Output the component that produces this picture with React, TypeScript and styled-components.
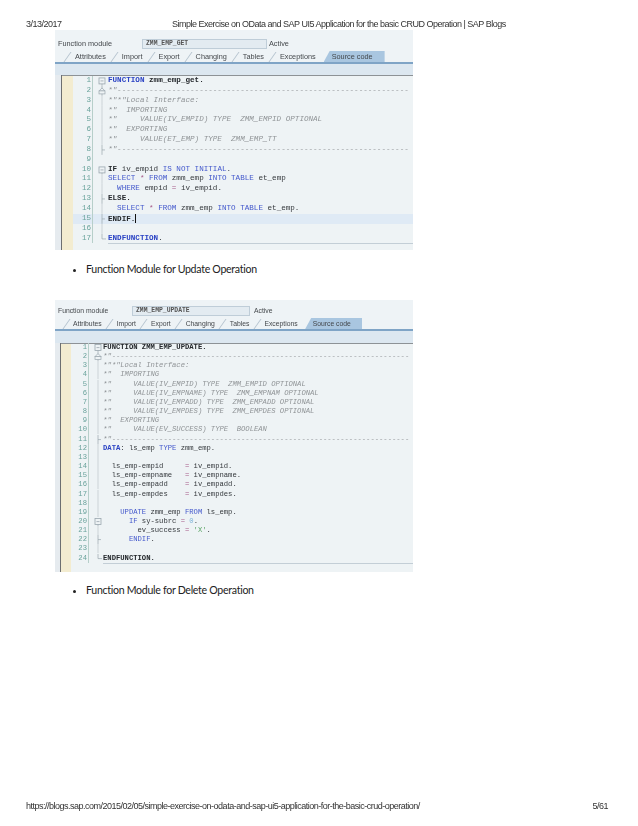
import React, { FC } from 'react'
import styled, { createGlobalStyle } from 'styled-components'

type Kind = 'plain' | 'key' | 'keyBold' | 'bold' | 'note' | 'op' | 'num' | 'str'
type Seg = [Kind, string]
type Fold = 'box' | 'open' | 'tick' | 'end' | 'line' | 'none'
type CodeLine = { segs: Seg[]; fold?: Fold; active?: boolean; caret?: boolean }

type Metrics = {
  height: number
  labelWidth: number
  fieldWidth: number
  fieldGap: number
  topPad: number
  stripLeft: number
  tabPad: number
  barBand: number
  yellowLeft: number
  yellowWidth: number
  numWidth: number
  foldWidth: number
  codeTop: number
  lineHeight: number
  fontSize: number
  uiSize: number
}

const GET_CODE: CodeLine[] = [
  { fold: 'box', segs: [['keyBold', 'FUNCTION'], ['bold', ' zmm_emp_get.']] },
  { fold: 'open', segs: [['note', '*"' + '-'.repeat(64)]] },
  { segs: [['note', '*"*"Local Interface:']] },
  { segs: [['note', '*"  IMPORTING']] },
  { segs: [['note', '*"     VALUE(IV_EMPID) TYPE  ZMM_EMPID OPTIONAL']] },
  { segs: [['note', '*"  EXPORTING']] },
  { segs: [['note', '*"     VALUE(ET_EMP) TYPE  ZMM_EMP_TT']] },
  { fold: 'tick', segs: [['note', '*"' + '-'.repeat(64)]] },
  { fold: 'none', segs: [] },
  { fold: 'box', segs: [['bold', 'IF'], ['plain', ' iv_empid '], ['key', 'IS NOT INITIAL'], ['plain', '.']] },
  { segs: [['key', 'SELECT'], ['op', ' * '], ['key', 'FROM'], ['plain', ' zmm_emp '], ['key', 'INTO TABLE'], ['plain', ' et_emp']] },
  { segs: [['key', '  WHERE'], ['plain', ' empid '], ['op', '='], ['plain', ' iv_empid.']] },
  { fold: 'tick', segs: [['bold', 'ELSE.']] },
  { segs: [['key', '  SELECT'], ['op', ' * '], ['key', 'FROM'], ['plain', ' zmm_emp '], ['key', 'INTO TABLE'], ['plain', ' et_emp.']] },
  { fold: 'tick', active: true, caret: true, segs: [['bold', 'ENDIF.']] },
  { segs: [] },
  { fold: 'end', segs: [['keyBold', 'ENDFUNCTION'], ['plain', '.']] },
]

const UPDATE_CODE: CodeLine[] = [
  { fold: 'box', segs: [['bold', 'FUNCTION ZMM_EMP_UPDATE.']] },
  { fold: 'open', segs: [['note', '*"' + '-'.repeat(69)]] },
  { segs: [['note', '*"*"Local Interface:']] },
  { segs: [['note', '*"  IMPORTING']] },
  { segs: [['note', '*"     VALUE(IV_EMPID) TYPE  ZMM_EMPID OPTIONAL']] },
  { segs: [['note', '*"     VALUE(IV_EMPNAME) TYPE  ZMM_EMPNAM OPTIONAL']] },
  { segs: [['note', '*"     VALUE(IV_EMPADD) TYPE  ZMM_EMPADD OPTIONAL']] },
  { segs: [['note', '*"     VALUE(IV_EMPDES) TYPE  ZMM_EMPDES OPTIONAL']] },
  { segs: [['note', '*"  EXPORTING']] },
  { segs: [['note', '*"     VALUE(EV_SUCCESS) TYPE  BOOLEAN']] },
  { fold: 'tick', segs: [['note', '*"' + '-'.repeat(69)]] },
  { segs: [['keyBold', 'DATA'], ['plain', ': ls_emp '], ['key', 'TYPE'], ['plain', ' zmm_emp.']] },
  { segs: [] },
  { segs: [['plain', '  ls_emp-empid     '], ['op', '='], ['plain', ' iv_empid.']] },
  { segs: [['plain', '  ls_emp-empname   '], ['op', '='], ['plain', ' iv_empname.']] },
  { segs: [['plain', '  ls_emp-empadd    '], ['op', '='], ['plain', ' iv_empadd.']] },
  { segs: [['plain', '  ls_emp-empdes    '], ['op', '='], ['plain', ' iv_empdes.']] },
  { segs: [] },
  { segs: [['key', '    UPDATE'], ['plain', ' zmm_emp '], ['key', 'FROM'], ['plain', ' ls_emp.']] },
  { fold: 'box', segs: [['key', '      IF'], ['plain', ' sy-subrc '], ['op', '='], ['num', ' 0'], ['plain', '.']] },
  { segs: [['plain', '        ev_success '], ['op', '='], ['str', " 'X'"], ['plain', '.']] },
  { fold: 'tick', segs: [['key', '      ENDIF'], ['plain', '.']] },
  { segs: [] },
  { fold: 'end', segs: [['bold', 'ENDFUNCTION.']] },
]

const TABS = ['Attributes', 'Import', 'Export', 'Changing', 'Tables', 'Exceptions', 'Source code']

const GlobalStyle = createGlobalStyle`
  html, body {
    margin: 0;
    background: #fff;
  }
`

const Page = styled.div`
  width: 638px;
  height: 826px;
  display: flex;
  flex-direction: column;
  overflow: hidden;
  background: #fff;
  color: #2a2a2a;
  font-family: 'Liberation Sans', Arial, sans-serif;
`

const PrintLine = styled.div<{ $top: number; $bottom: number }>`
  display: flex;
  justify-content: space-between;
  padding: ${(p) => p.$top}px 30px ${(p) => p.$bottom}px 26px;
  font-size: 9px;
  line-height: 12px;
  letter-spacing: -0.5px;
  color: #333;
  filter: blur(0.25px);
`

const PrintDate = styled.span`
  width: 146px;
  flex: none;
`

const PrintTitle = styled.span`
  flex: 1;
`

const Spacer = styled.div`
  flex: 1;
`

const Shot = styled.div<{ $m: Metrics }>`
  margin-left: 55px;
  width: 358px;
  height: ${(p) => p.$m.height}px;
  display: flex;
  flex-direction: column;
  background: #eef3f6;
  filter: blur(0.4px);
  font-family: 'Liberation Sans', Tahoma, sans-serif;
  font-size: ${(p) => p.$m.uiSize}px;
  color: #44484c;
  overflow: hidden;
`

const FieldRow = styled.div<{ $m: Metrics }>`
  display: flex;
  align-items: center;
  height: 11px;
  padding: ${(p) => p.$m.topPad}px 0 2px 3px;
  flex: none;
`

const FieldLabel = styled.span<{ $m: Metrics }>`
  width: ${(p) => p.$m.labelWidth}px;
  white-space: nowrap;
  flex: none;
`

const FieldInput = styled.div<{ $m: Metrics }>`
  width: ${(p) => p.$m.fieldWidth}px;
  height: 10px;
  margin-right: ${(p) => p.$m.fieldGap}px;
  padding-left: 3px;
  box-sizing: border-box;
  flex: none;
  background: #e3ebf1;
  border: 1px solid #bfcdd8;
  font-family: 'Liberation Mono', monospace;
  font-size: 6.4px;
  font-weight: bold;
  line-height: 8px;
  color: #555;
`

const TabStrip = styled.div<{ $m: Metrics }>`
  display: flex;
  height: 11px;
  flex: none;
  padding-left: ${(p) => p.$m.stripLeft}px;
`

const Tab = styled.div<{ $active: boolean; $m: Metrics }>`
  position: relative;
  padding: 0 ${(p) => (p.$active ? p.$m.tabPad + 4 : p.$m.tabPad)}px 0 ${(p) => p.$m.tabPad}px;
  line-height: 11px;
  white-space: nowrap;
  color: #44484c;
  background: ${(p) => (p.$active ? '#a9c6e0' : 'transparent')};
  clip-path: ${(p) => (p.$active ? 'polygon(6px 0, 100% 0, 100% 100%, 0 100%)' : 'none')};

  &::before {
    content: '';
    position: absolute;
    left: 0;
    top: 1px;
    bottom: 0;
    width: 5px;
    display: ${(p) => (p.$active ? 'none' : 'block')};
    border-left: 1px solid #b4c2ce;
    transform: skewX(-35deg);
  }
`

const TabBar = styled.div`
  height: 2px;
  flex: none;
  background: #7fa4c6;
`

const TabBand = styled.div<{ $m: Metrics }>`
  height: ${(p) => p.$m.barBand}px;
  flex: none;
  background: #dce7f0;
`

const Editor = styled.div`
  flex: 1;
  display: flex;
  min-height: 0;
  background: #eef3f5;
`

const GutterStrip = styled.div<{ $m: Metrics }>`
  flex: none;
  width: ${(p) => p.$m.yellowLeft}px;
  background: #e6ebef;
  border-right: 1px solid #6d6f70;
`

const YellowStrip = styled.div<{ $m: Metrics }>`
  flex: none;
  width: ${(p) => p.$m.yellowWidth}px;
  background: #f3ecd0;
  box-shadow: inset 0 1px 0 #8d9296;
`

const CodeBody = styled.div<{ $m: Metrics }>`
  flex: 1;
  min-width: 0;
  display: flex;
  flex-direction: column;
  padding-top: ${(p) => p.$m.codeTop}px;
  box-shadow: inset 0 1px 0 #8d9296;
  font-family: 'Liberation Mono', 'Courier New', monospace;
  font-size: ${(p) => p.$m.fontSize}px;
  line-height: ${(p) => p.$m.lineHeight}px;
`

const Row = styled.div<{ $m: Metrics; $active?: boolean }>`
  display: flex;
  height: ${(p) => p.$m.lineHeight}px;
  flex: none;
  background: ${(p) => (p.$active ? '#dfeaf5' : 'transparent')};
`

const LineNo = styled.span<{ $m: Metrics }>`
  flex: none;
  width: ${(p) => p.$m.numWidth}px;
  padding-right: 1px;
  box-sizing: border-box;
  text-align: right;
  color: #6aa39c;
  border-right: 1px solid #b7cfca;
`

const FoldCell = styled.span<{ $m: Metrics }>`
  flex: none;
  width: ${(p) => p.$m.foldWidth}px;
  display: flex;
  padding-left: 4px;
  box-sizing: border-box;
`

const CodeText = styled.span`
  flex: 1;
  white-space: pre;
  overflow: hidden;
`

const kindStyles: Record<Kind, string> = {
  plain: 'color: #34383c;',
  key: 'color: #4358cc;',
  keyBold: 'color: #2b43c4; font-weight: bold;',
  bold: 'color: #24282c; font-weight: bold;',
  note: 'color: #8f9396; font-style: italic;',
  op: 'color: #a65a88;',
  num: 'color: #7fb4d8;',
  str: 'color: #62a86c;',
}

const Tok = styled.span<{ $kind: Kind }>`
  ${(p) => kindStyles[p.$kind]}
`

const Caret = styled.span`
  display: inline-block;
  width: 1px;
  height: 9px;
  vertical-align: -2px;
  background: #111;
`

const EndRule = styled.div<{ $m: Metrics }>`
  height: 1px;
  background: #c3ced6;
  margin-left: ${(p) => p.$m.numWidth + p.$m.foldWidth}px;
`

const BulletLine = styled.ul<{ $top: number; $bottom: number }>`
  margin: ${(p) => p.$top}px 0 ${(p) => p.$bottom}px;
  padding: 0 0 0 86px;
  list-style: disc;
  font-family: Lato, Tahoma, sans-serif;
  font-size: 10.6px;
  letter-spacing: -0.3px;
  line-height: 16px;
  color: #222;
`

const FoldMark: FC<{ fold: Fold; h: number }> = ({ fold, h }) => {
  if (fold === 'none') return null
  const mid = h / 2
  const stroke = '#9aa6ae'
  return (
    <svg width="10" height={h} viewBox={`0 0 10 ${h}`}>
      {fold === 'box' && (
        <>
          <path d={`M5 ${mid + 3}V${h}`} stroke={stroke} strokeWidth="0.7" />
          <rect x="2" y={mid - 3} width="6" height="6" fill="none" stroke={stroke} strokeWidth="0.8" />
          <path d={`M3.5 ${mid}H6.5`} stroke={stroke} strokeWidth="0.8" />
        </>
      )}
      {fold === 'open' && (
        <>
          <path d={`M5 0V${h}`} stroke={stroke} strokeWidth="0.7" />
          <path d={`M5 ${mid - 3}L8 ${mid}H2Z`} fill="#eef3f5" stroke={stroke} strokeWidth="0.7" />
          <rect x="2" y={mid} width="6" height="3" fill="#eef3f5" stroke={stroke} strokeWidth="0.7" />
        </>
      )}
      {fold === 'tick' && <path d={`M5 0V${h}M5 ${mid}H8`} stroke={stroke} strokeWidth="0.7" />}
      {fold === 'line' && <path d={`M5 0V${h}`} stroke={stroke} strokeWidth="0.6" opacity="0.7" />}
      {fold === 'end' && <path d={`M5 0V${mid}H9`} fill="none" stroke={stroke} strokeWidth="0.7" />}
    </svg>
  )
}

const CodeShot: FC<{ name: string; code: CodeLine[]; m: Metrics }> = ({ name, code, m }) => (
  <Shot $m={m}>
    <FieldRow $m={m}>
      <FieldLabel $m={m}>Function module</FieldLabel>
      <FieldInput $m={m}>{name}</FieldInput>
      <span>Active</span>
    </FieldRow>
    <TabStrip $m={m}>
      {TABS.map((t) => (
        <Tab key={t} $m={m} $active={t === 'Source code'}>
          {t}
        </Tab>
      ))}
    </TabStrip>
    <TabBar />
    <TabBand $m={m} />
    <Editor>
      <GutterStrip $m={m} />
      <YellowStrip $m={m} />
      <CodeBody $m={m}>
        {code.map((line, i) => (
          <Row key={i} $m={m} $active={line.active}>
            <LineNo $m={m}>{i + 1}</LineNo>
            <FoldCell $m={m}>
              <FoldMark fold={line.fold ?? 'line'} h={m.lineHeight} />
            </FoldCell>
            <CodeText>
              {line.segs.map(([kind, text], j) => (
                <Tok key={j} $kind={kind}>
                  {text}
                </Tok>
              ))}
              {line.caret && <Caret />}
            </CodeText>
          </Row>
        ))}
        <EndRule $m={m} />
      </CodeBody>
    </Editor>
  </Shot>
)

const GET_METRICS: Metrics = {
  height: 220,
  labelWidth: 84,
  fieldWidth: 125,
  fieldGap: 2,
  topPad: 8,
  stripLeft: 12,
  tabPad: 8,
  barBand: 11,
  yellowLeft: 6,
  yellowWidth: 11,
  numWidth: 20,
  foldWidth: 15,
  codeTop: 1,
  lineHeight: 9.85,
  fontSize: 7.6,
  uiSize: 7.3,
}

const UPDATE_METRICS: Metrics = {
  height: 272,
  labelWidth: 74,
  fieldWidth: 118,
  fieldGap: 4,
  topPad: 5,
  stripLeft: 10.5,
  tabPad: 7.5,
  barBand: 12,
  yellowLeft: 5,
  yellowWidth: 10,
  numWidth: 18,
  foldWidth: 14,
  codeTop: 0,
  lineHeight: 9.17,
  fontSize: 7.2,
  uiSize: 6.8,
}

const App: FC = () => (
  <Page>
    <GlobalStyle />
    <PrintLine $top={18} $bottom={0}>
      <PrintDate>3/13/2017</PrintDate>
      <PrintTitle>Simple Exercise on OData and SAP UI5 Application for the basic CRUD Operation | SAP Blogs</PrintTitle>
    </PrintLine>
    <CodeShot name="ZMM_EMP_GET" code={GET_CODE} m={GET_METRICS} />
    <BulletLine $top={11} $bottom={23}>
      <li>Function Module for Update Operation</li>
    </BulletLine>
    <CodeShot name="ZMM_EMP_UPDATE" code={UPDATE_CODE} m={UPDATE_METRICS} />
    <BulletLine $top={10} $bottom={0}>
      <li>Function Module for Delete Operation</li>
    </BulletLine>
    <Spacer />
    <PrintLine $top={0} $bottom={14}>
      <span>https://blogs.sap.com/2015/02/05/simple-exercise-on-odata-and-sap-ui5-application-for-the-basic-crud-operation/</span>
      <span>5/61</span>
    </PrintLine>
  </Page>
)

export default App
